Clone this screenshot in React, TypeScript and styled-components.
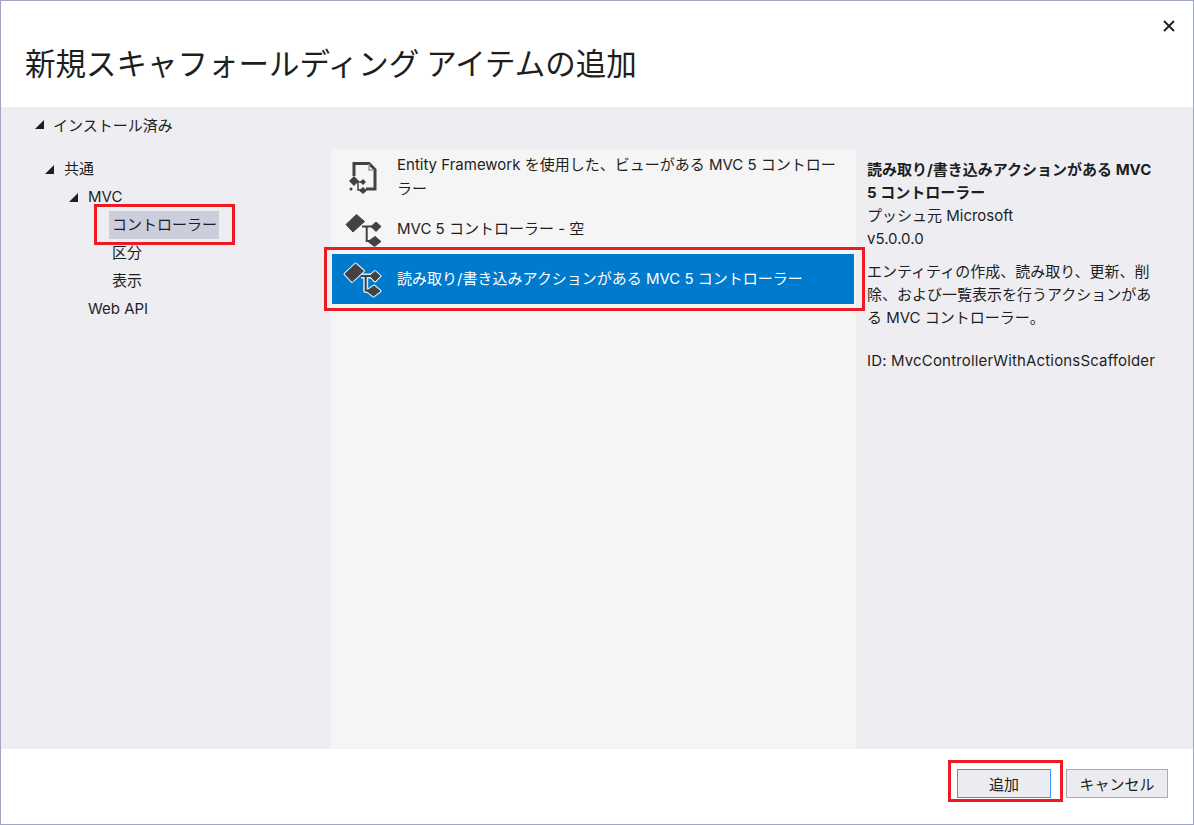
import * as React from 'react';
import styled, { createGlobalStyle } from 'styled-components';

const GlobalStyle = createGlobalStyle`
	html, body {
		margin: 0;
		padding: 0;
		background: #ffffff;
	}
`;

const FONT = `'Noto Sans CJK JP', 'Noto Sans', sans-serif`;
const UI_FONT = `'Inter', 'Noto Sans CJK JP', sans-serif`;

const Dialog = styled.div`
	position: relative;
	width: 1194px;
	height: 825px;
	box-sizing: border-box;
	border: 1px solid #a3a3c2;
	display: flex;
	flex-direction: column;
	background: #ffffff;
	color: #1e1e1e;
	font-family: ${UI_FONT};
	font-size: 15px;
	overflow: hidden;
`;

const Header = styled.header`
	height: 106px;
	flex: none;
	box-sizing: border-box;
	padding: 39px 0 0 24px;
`;

const Title = styled.h1`
	margin: 0;
	font-family: ${FONT};
	font-size: 30.5px;
	line-height: 44px;
	font-weight: 400;
	color: #1e1e1e;
`;

const CloseIcon = styled.svg`
	position: absolute;
	top: 19px;
	right: 18px;
	width: 12px;
	height: 12px;
`;

const Body = styled.div`
	flex: 1;
	display: flex;
	flex-direction: column;
	background: #eeeef2;
	min-height: 0;
`;

const InstalledRow = styled.div`
	height: 42px;
	flex: none;
	box-sizing: border-box;
	display: flex;
	align-items: center;
	padding: 0 0 7px 34px;
	gap: 9px;
`;

const Columns = styled.div`
	flex: 1;
	display: flex;
	min-height: 0;
`;

const TreeColumn = styled.nav`
	width: 330px;
	flex: none;
	box-sizing: border-box;
	padding-top: 6px;
`;

const TreeRow = styled.div<{ $indent: number }>`
	height: 28px;
	display: flex;
	align-items: center;
	padding-left: ${(p) => p.$indent}px;
	gap: 7px;
	font-size: 15px;
	color: #1e1e1e;
`;

const Arrow = styled.span`
	width: 0;
	height: 0;
	border-left: 9px solid transparent;
	border-bottom: 9px solid #1e1e1e;
	flex: none;
`;

const TreeLabel = styled.span<{ $selected?: boolean }>`
	padding: 0 2px 0 3px;
	height: 28px;
	line-height: 27px;
	background: ${(p) => (p.$selected ? '#ccceDB' : 'transparent')};
`;

const ListColumn = styled.div`
	width: 525px;
	flex: none;
	background: #f5f5f5;
	box-sizing: border-box;
	padding: 0 2px 0 1px;
`;

const ListItem = styled.div<{ $selected?: boolean; $height: number }>`
	height: ${(p) => p.$height}px;
	margin-top: ${(p) => (p.$selected ? 1 : 0)}px;
	display: flex;
	align-items: center;
	box-sizing: border-box;
	padding: 0 10px 0 10px;
	gap: 13px;
	background: ${(p) => (p.$selected ? '#007acc' : 'transparent')};
	color: ${(p) => (p.$selected ? '#ffffff' : '#1e1e1e')};
	font-size: 15px;
	line-height: 24px;
`;

const ListText = styled.span<{ $selected?: boolean }>`
	margin-top: ${(p) => (p.$selected ? 0 : 2)}px;
`;

const IconSlot = styled.svg`
	width: 42px;
	height: 42px;
	flex: none;
`;

const DetailColumn = styled.aside`
	flex: 1;
	box-sizing: border-box;
	padding: 9px 34px 0 11px;
	font-size: 15px;
	line-height: 23px;
`;

const DetailTitle = styled.div`
	font-weight: 700;
`;

const DetailText = styled.div<{ $gap?: number; $spacing?: number }>`
	margin-top: ${(p) => p.$gap ?? 0}px;
	letter-spacing: ${(p) => p.$spacing ?? 0}px;
`;

const Footer = styled.footer`
	height: 75px;
	flex: none;
	box-sizing: border-box;
	display: flex;
	justify-content: flex-end;
	align-items: flex-start;
	gap: 15px;
	padding: 20px 25px 0 0;
`;

const Button = styled.button<{ $primary?: boolean }>`
	width: ${(p) => (p.$primary ? '94px' : '102px')};
	height: 29px;
	box-sizing: border-box;
	padding: 0;
	border: 1px solid ${(p) => (p.$primary ? '#3399ff' : '#acacac')};
	background: #ececf0;
	color: #1e1e1e;
	font-family: ${UI_FONT};
	font-size: 15px;
`;

const Callout = styled.div<{ $x: number; $y: number; $w: number; $h: number }>`
	position: absolute;
	left: ${(p) => p.$x}px;
	top: ${(p) => p.$y}px;
	width: ${(p) => p.$w}px;
	height: ${(p) => p.$h}px;
	box-sizing: border-box;
	border: 3px solid #ed1c24;
	pointer-events: none;
`;

function ScaffoldIcon({ selected }: { selected?: boolean }) {
	const solids = (
		<>
			<polygon points="4,17.5 14.5,7.5 22.5,14.5 11,25" />
			<polygon points="29,19.5 34,15 39,19.5 34,24.5" />
			<polygon points="26,34.5 33,29.5 39,34.5 32.5,39.5" />
		</>
	);
	const wires = <path d="M20 19.5 H30 M24.7 19.5 V34 H28" fill="none" />;
	return (
		<IconSlot viewBox="0 0 42 42">
			<g transform={selected ? 'translate(-1 -1.5)' : undefined}>
				{selected && (
					<g fill="#dbe9f5" stroke="#dbe9f5" strokeLinejoin="round">
						<g strokeWidth="3">{solids}</g>
						<g strokeWidth="5">{wires}</g>
					</g>
				)}
				<g stroke="#424242">
					<g strokeWidth="2">{wires}</g>
					<g fill="#424242" strokeWidth="1" strokeLinejoin="round">{solids}</g>
				</g>
			</g>
		</IconSlot>
	);
}

function FileIcon() {
	return (
		<IconSlot viewBox="0 0 42 42">
			<path d="M12 21 V8.5 H27 L33 14.5 V34 H24" fill="none" stroke="#424242" strokeWidth="3" />
			<path d="M27 9 V15 H32" fill="none" stroke="#9a9a9a" strokeWidth="1.5" />
			<polygon points="7,26 12,21 17,26 12,31" fill="#424242" />
			<polygon points="18,27 21,24 24,27 21,30" fill="#424242" />
			<polygon points="17,35.5 21,32 25,35.5 21,39" fill="#424242" />
			<circle cx="9" cy="34" r="1.5" fill="#424242" />
			<path d="M14 27 H21 M16 27 V35 H19" fill="none" stroke="#424242" strokeWidth="1.5" />
		</IconSlot>
	);
}

export default function App() {
	return (
		<>
			<GlobalStyle />
			<Dialog>
				<Header>
					<Title>新規スキャフォールディング アイテムの追加</Title>
				</Header>
				<CloseIcon viewBox="0 0 12 12">
					<path d="M1 1 L11 11 M11 1 L1 11" stroke="#1e1e1e" strokeWidth="1.8" />
				</CloseIcon>
				<Body>
					<InstalledRow>
						<Arrow />
						<span>インストール済み</span>
					</InstalledRow>
					<Columns>
						<TreeColumn>
							<TreeRow $indent={44}><Arrow /><TreeLabel>共通</TreeLabel></TreeRow>
							<TreeRow $indent={68}><Arrow /><TreeLabel>MVC</TreeLabel></TreeRow>
							<TreeRow $indent={108}><TreeLabel $selected>コントローラー</TreeLabel></TreeRow>
							<TreeRow $indent={108}><TreeLabel>区分</TreeLabel></TreeRow>
							<TreeRow $indent={108}><TreeLabel>表示</TreeLabel></TreeRow>
							<TreeRow $indent={84}><TreeLabel>Web API</TreeLabel></TreeRow>
						</TreeColumn>
						<ListColumn>
							<ListItem $height={54}>
								<FileIcon />
								<ListText>Entity Framework を使用した、ビューがある MVC 5 コントローラー</ListText>
							</ListItem>
							<ListItem $height={50}>
								<ScaffoldIcon />
								<ListText>MVC 5 コントローラー - 空</ListText>
							</ListItem>
							<ListItem $height={50} $selected>
								<ScaffoldIcon selected />
								<ListText $selected>読み取り/書き込みアクションがある MVC 5 コントローラー</ListText>
							</ListItem>
						</ListColumn>
						<DetailColumn>
							<DetailTitle>読み取り/書き込みアクションがある MVC 5 コントローラー</DetailTitle>
							<DetailText>プッシュ元 Microsoft</DetailText>
							<DetailText>v5.0.0.0</DetailText>
							<DetailText $gap={10}>エンティティの作成、読み取り、更新、削除、および一覧表示を行うアクションがある MVC コントローラー。</DetailText>
							<DetailText $gap={20} $spacing={0.16}>ID: MvcControllerWithActionsScaffolder</DetailText>
						</DetailColumn>
					</Columns>
				</Body>
				<Footer>
					<Button $primary>追加</Button>
					<Button>キャンセル</Button>
				</Footer>
				<Callout $x={93} $y={203} $w={141} $h={41} />
				<Callout $x={323} $y={246} $w={541} $h={64} />
				<Callout $x={947} $y={759} $w={115} $h={42} />
			</Dialog>
		</>
	);
}
